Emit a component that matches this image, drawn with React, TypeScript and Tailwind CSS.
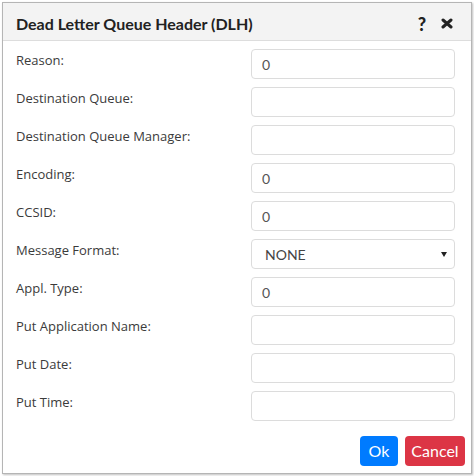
import React from "react";

const fields = [
  { label: "Reason:", value: "0" },
  { label: "Destination Queue:", value: "" },
  { label: "Destination Queue Manager:", value: "" },
  { label: "Encoding:", value: "0" },
  { label: "CCSID:", value: "0" },
  { label: "Message Format:", value: "NONE", select: true },
  { label: "Appl. Type:", value: "0" },
  { label: "Put Application Name:", value: "" },
  { label: "Put Date:", value: "" },
  { label: "Put Time:", value: "" },
];

const sans = { fontFamily: '"Open Sans", sans-serif' };

const FieldRow = ({ label, value, select }: any) => (
  <div className="flex items-start h-[30px]">
    <div className="w-[235px] pt-[2px] text-[13px] leading-[18px] text-[#3b3b3b]" style={sans}>{label}</div>
    {select ? (
      <div className="relative w-[204px] h-[30px] border border-[#dcdcdc] rounded-[4px] bg-white flex items-center pl-[13px] text-[14px] text-[#444]">
        {value}
        <span className="absolute right-[7px] top-[12px] w-0 h-0 border-l-[3px] border-r-[3px] border-t-[5px] border-l-transparent border-r-transparent border-t-[#222]"></span>
      </div>
    ) : (
      <input
        readOnly
        value={value}
        className="w-[204px] h-[30px] border border-[#dcdcdc] rounded-[4px] bg-white px-[10px] text-[14px] text-[#555] outline-none"
      />
    )}
  </div>
);

export default function App() {
  return (
    <div className="w-[474px] h-[476px] bg-white p-[2px]" style={{ fontFamily: '"Segoe UI", Lato, sans-serif' }}>
      <div className="h-full border border-[#b5b5b5] shadow-[1px_1px_2px_rgba(0,0,0,0.25)] flex flex-col bg-white">
        {/* Header */}
        <div className="h-[38px] bg-[#f3f3f3] border-b border-[#dddddd] flex items-center pt-[4px] pl-[13px] pr-[18px]">
          <h1 className="text-[16px] font-bold text-[#222] flex-1">Dead Letter Queue Header (DLH)</h1>
          <span className="text-[18px] font-black text-[#222] mr-[15px] leading-none">?</span>
          <svg width="12" height="11" viewBox="0 0 12 11">
            <path d="M2 2 L10 9 M10 2 L2 9" stroke="#222" strokeWidth="3" strokeLinecap="round" />
          </svg>
        </div>

        {/* Fields */}
        <div className="flex flex-col gap-[8px] pt-[8px] pl-[13px] pr-[15px]">
          {fields.map((f) => (
            <FieldRow key={f.label} {...f} />
          ))}
        </div>

        {/* Footer */}
        <div className="flex justify-end gap-[7px] pt-[15px] pr-[6px]">
          <button className="h-[30px] w-[38px] rounded-[4px] bg-[#007bff] text-white text-[16px]">Ok</button>
          <button className="h-[30px] w-[60px] rounded-[4px] bg-[#dc3545] text-white text-[16px]">Cancel</button>
        </div>
      </div>
    </div>
  );
}
